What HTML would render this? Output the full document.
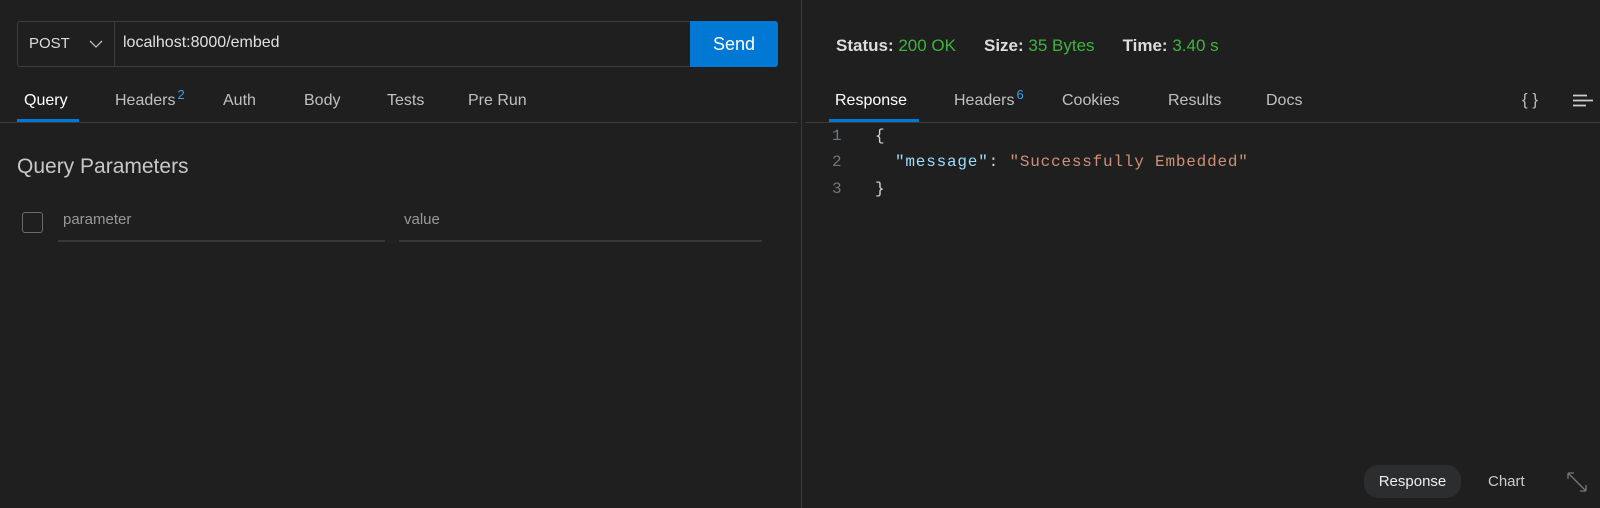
<!DOCTYPE html>
<html><head><style>
*{margin:0;padding:0;box-sizing:border-box}
body{width:1600px;height:508px;background:#1f1f1f;font-family:"Liberation Sans",sans-serif;color:#ccc;position:relative;overflow:hidden}
.a{position:absolute;white-space:nowrap}
.t{font-size:16px;color:#c0c0c0;top:92px}
.sup{font-size:13px;color:#3ba0e8;position:relative;top:-6px;margin-left:2px}
.mono{font-family:"Liberation Mono",monospace;font-size:16px;letter-spacing:0.8px}
.ln{color:#6e7681;left:832px}
</style></head><body>
<div class="a" style="left:17px;top:21px;width:761px;height:46px;border:1px solid #3c3c3c;border-radius:3px;background:#1f1f1f"></div>
<div class="a" style="left:114px;top:22px;width:1px;height:44px;background:#3c3c3c"></div>
<div class="a" style="left:29px;top:35px;font-size:15px;color:#ddd">POST</div>
<svg class="a" style="left:89px;top:39px" width="14" height="10"><path d="M1 2 L7 8 L13 2" stroke="#bbb" stroke-width="1.3" fill="none"/></svg>
<div class="a" style="left:123px;top:34px;font-size:16px;color:#e0e0e0">localhost:8000/embed</div>
<div class="a" style="left:690px;top:21px;width:88px;height:46px;background:#0078d4;border-radius:0 3px 3px 0;color:#fff;font-size:18px;text-align:center;line-height:46px">Send</div>
<div class="a t" style="left:24px;color:#fff">Query</div>
<div class="a t" style="left:115px">Headers<span class="sup">2</span></div>
<div class="a t" style="left:223px">Auth</div>
<div class="a t" style="left:304px">Body</div>
<div class="a t" style="left:387px">Tests</div>
<div class="a t" style="left:468px">Pre Run</div>
<div class="a" style="left:17px;top:119px;width:62px;height:3px;background:#0078d4"></div>
<div class="a" style="left:0;top:122px;width:797px;height:1px;background:#3c3c3c"></div>
<div class="a" style="left:805px;top:122px;width:795px;height:1px;background:#3c3c3c"></div>
<div class="a" style="left:801px;top:0;width:1px;height:508px;background:#3c3c3c"></div>
<div class="a" style="left:17px;top:155px;font-size:21px;color:#c8c8c8">Query Parameters</div>
<div class="a" style="left:22px;top:212px;width:21px;height:21px;border:1px solid #6a6a6a;border-radius:3px"></div>
<div class="a" style="left:63px;top:211px;font-size:15px;color:#999">parameter</div>
<div class="a" style="left:58px;top:240px;width:327px;height:2px;background:#383838"></div>
<div class="a" style="left:404px;top:211px;font-size:15px;color:#999">value</div>
<div class="a" style="left:399px;top:240px;width:363px;height:2px;background:#383838"></div>
<div class="a" style="left:836px;top:36px;font-size:17px;font-weight:bold;color:#ddd">Status: <span style="color:#3fb33f;font-weight:normal">200 OK</span><span style="margin-left:28px">Size: </span><span style="color:#3fb33f;font-weight:normal">35 Bytes</span><span style="margin-left:28px">Time: </span><span style="color:#3fb33f;font-weight:normal">3.40 s</span></div>
<div class="a t" style="left:835px;color:#fff">Response</div>
<div class="a t" style="left:954px">Headers<span class="sup">6</span></div>
<div class="a t" style="left:1062px">Cookies</div>
<div class="a t" style="left:1168px">Results</div>
<div class="a t" style="left:1266px">Docs</div>
<div class="a" style="left:829px;top:119px;width:90px;height:3px;background:#0078d4"></div>
<div class="a" style="left:1522px;top:90px;font-size:17px;color:#bbb">{ }</div>
<svg class="a" style="left:1573px;top:94px" width="20" height="14"><path d="M0 1.5H14M0 6.5H20M0 11.5H13" stroke="#ccc" stroke-width="1.8"/></svg>
<div class="a mono ln" style="top:127px">1</div>
<div class="a mono ln" style="top:153px">2</div>
<div class="a mono ln" style="top:180px">3</div>
<div class="a mono" style="left:875px;top:127px;color:#d4d4d4">{</div>
<div class="a mono" style="left:895px;top:153px;color:#d4d4d4"><span style="color:#9cdcfe">"message"</span>: <span style="color:#ce9178">"Successfully Embedded"</span></div>
<div class="a mono" style="left:875px;top:180px;color:#d4d4d4">}</div>
<div class="a" style="left:1364px;top:465px;width:97px;height:33px;background:#2b2d2e;border-radius:14px;color:#eee;font-size:15px;text-align:center;line-height:33px">Response</div>
<div class="a" style="left:1488px;top:473px;font-size:15px;color:#ccc">Chart</div>
<svg class="a" style="left:1566px;top:471px" width="22" height="22"><path d="M2 2L20 20M2 2H8M2 2V8M20 20H14M20 20V14" stroke="#777" stroke-width="1.3" fill="none"/></svg>
</body></html>
